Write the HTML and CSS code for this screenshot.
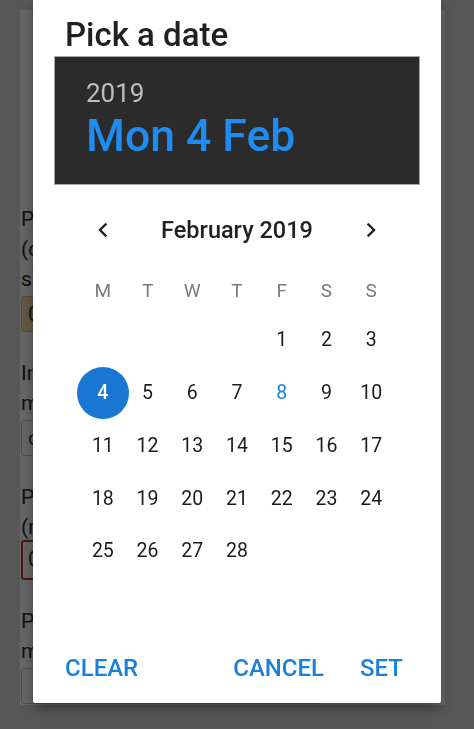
FILE: index.html
```html
<!DOCTYPE html>
<html lang="en">
<head>
<meta charset="utf-8">
<title>Pick a date</title>
<link rel="stylesheet" href="styles.css">
</head>
<body>
<main class="page">
  <form class="form">
    <div class="field first">
      <label class="label">Price<br>(cost<br>share)</label>
      <div class="input tan">0</div>
    </div>
    <div class="field">
      <label class="label">Interest<br>monthly</label>
      <div class="input">o</div>
    </div>
    <div class="field">
      <label class="label">Payment<br>(required)</label>
      <div class="input error">0</div>
    </div>
    <div class="field">
      <label class="label">Period<br>months</label>
      <div class="input"></div>
    </div>
  </form>
</main>

<div class="scrim"></div>

<section class="dialog" role="dialog" aria-label="Pick a date">
  <h1 class="title">Pick a date</h1>
  <div class="summary">
    <div class="year">2019</div>
    <div class="date">Mon 4 Feb</div>
  </div>

  <div class="calendar">
    <div class="nav">
      <span class="chev">
        <svg width="11" height="14" viewBox="0 0 11 14"><polyline points="8.5,1.5 3,7 8.5,12.5" fill="none" stroke="#222" stroke-width="2.4" stroke-linecap="square"/></svg>
      </span>
      <span class="month">February 2019</span>
      <span class="chev">
        <svg width="11" height="14" viewBox="0 0 11 14"><polyline points="2.5,1.5 8,7 2.5,12.5" fill="none" stroke="#222" stroke-width="2.4" stroke-linecap="square"/></svg>
      </span>
    </div>
    <div class="weekdays">
      <span>M</span><span>T</span><span>W</span><span>T</span><span>F</span><span>S</span><span>S</span>
    </div>
    <div class="days">
      <span></span><span></span><span></span><span></span>
      <span>1</span><span>2</span><span>3</span>
      <span><b class="selected">4</b></span><span>5</span><span>6</span><span>7</span><span class="today">8</span><span>9</span><span>10</span>
      <span>11</span><span>12</span><span>13</span><span>14</span><span>15</span><span>16</span><span>17</span>
      <span>18</span><span>19</span><span>20</span><span>21</span><span>22</span><span>23</span><span>24</span>
      <span>25</span><span>26</span><span>27</span><span>28</span>
    </div>
  </div>

  <div class="actions">
    <button type="button" class="btn">CLEAR</button>
    <div class="right">
      <button type="button" class="btn">CANCEL</button>
      <button type="button" class="btn">SET</button>
    </div>
  </div>
</section>
</body>
</html>
```
FILE: styles.css
```css
html, body {
  margin: 0;
  padding: 0;
}
body {
  width: 474px;
  height: 729px;
  overflow: hidden;
  background: #d9d9d9;
  font-family: Roboto, "Noto Sans", "Liberation Sans", sans-serif;
}

/* background page (mostly covered by the dialog) */
.page {
  margin: 10px 29px 0 20px;
  background: #ffffff;
  padding: 0 0 1px 1px;
  height: 695px;
  box-sizing: border-box;
}
.form {
  padding-top: 194px;
  display: flex;
  flex-direction: column;
}
.field {
  display: flex;
  flex-direction: column;
  margin-top: 26px;
}
.field.first {
  margin-top: 0;
}
.label {
  font-size: 21px;
  line-height: 30px;
  color: #2a2a2a;
}
.input {
  margin-top: 2px;
  height: 36px;
  box-sizing: border-box;
  width: 300px;
  border: 1px solid #c8c8c8;
  border-radius: 3px;
  padding-left: 6px;
  font-size: 21px;
  line-height: 34px;
  color: #333;
  background: #fff;
}
.input.tan {
  background: #f6ddaa;
  border-color: #d7c08c;
}
.input.error {
  height: 40px;
  margin-top: -2px;
  border: 2px solid #c43a3a;
  padding-left: 5px;
}

.scrim {
  position: fixed;
  inset: 0;
  background: rgba(0, 0, 0, 0.6);
}

/* dialog */
.dialog {
  position: fixed;
  left: 33px;
  top: 0;
  width: 408px;
  height: 703px;
  background: #fff;
  border-radius: 0 0 2px 2px;
  box-shadow: 0 6px 14px rgba(0, 0, 0, 0.35);
  display: flex;
  flex-direction: column;
}
.title {
  margin: 0;
  padding: 15px 0 0 32px;
  font-size: 33px;
  line-height: 40px;
  font-weight: 500;
  color: #212121;
}
.summary {
  margin: 1px 21px 0;
  height: 129px;
  box-sizing: border-box;
  background: #2b2b2b;
  border: 1px solid #a8a8a8;
  padding: 21px 0 0 31px;
}
.year {
  font-size: 26px;
  line-height: 30px;
  color: #bdbdbd;
}
.date {
  margin-top: 3px;
  font-size: 44.5px;
  line-height: 50px;
  font-weight: 500;
  color: #1e8cf0;
}

.calendar {
  width: 313px;
  margin: 20px auto 0;
}
.nav {
  display: grid;
  grid-template-columns: 44.7px minmax(0, 1fr) 44.7px;
  height: 50px;
  align-items: center;
}
.chev {
  display: flex;
  justify-content: center;
  align-items: center;
}
.month {
  text-align: center;
  font-size: 23.5px;
  font-weight: 500;
  color: #212121;
}
.weekdays {
  margin-top: 11.5px;
  display: grid;
  grid-template-columns: repeat(7, minmax(0, 1fr));
  height: 47px;
  align-items: center;
  text-align: center;
  font-size: 19px;
  color: #7a7a7a;
}
.days {
  display: grid;
  grid-template-columns: repeat(7, minmax(0, 1fr));
  grid-auto-rows: 52.75px;
  font-size: 19.5px;
  color: #1c1c1c;
}
.days span {
  display: flex;
  justify-content: center;
  align-items: center;
}
.days .today {
  color: #1a7fd6;
}
.selected {
  flex-shrink: 0;
  width: 52px;
  height: 52px;
  border-radius: 50%;
  background: #1976d2;
  color: #fff;
  font-weight: 500;
  display: flex;
  justify-content: center;
  align-items: center;
}

.actions {
  margin-top: auto;
  height: 48px;
  padding: 0 38px 11px 32px;
  display: flex;
  align-items: center;
  justify-content: space-between;
}
.right {
  display: flex;
  gap: 36px;
}
.btn {
  border: 0;
  background: none;
  padding: 0;
  font-family: inherit;
  font-size: 24px;
  font-weight: 500;
  color: #1a7fd6;
  letter-spacing: 0;
}
```
